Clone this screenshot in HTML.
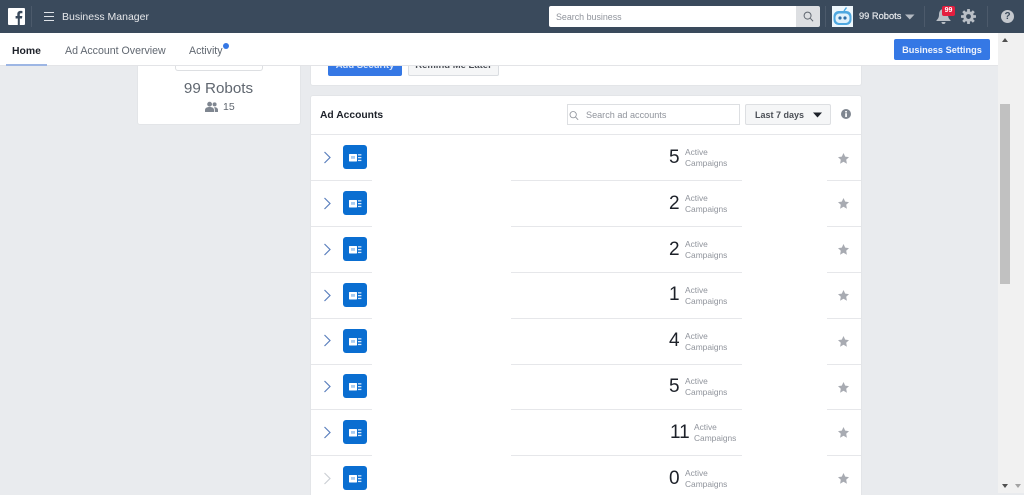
<!DOCTYPE html>
<html><head><meta charset="utf-8"><style>
*{box-sizing:border-box}
html,body{margin:0;padding:0;width:1024px;height:493px;overflow:hidden;background:#e9ebee;font-family:"Liberation Sans",sans-serif;color:#1d2129}
.a{position:absolute}
.t{position:absolute;white-space:nowrap}
.ln{position:absolute;height:1px;background:#e6e7ea}
.cnt{position:absolute;font-size:19px;line-height:22px;color:#1d2129;white-space:nowrap}
.lb{position:absolute;font-size:8.4px;line-height:10.5px;color:#90949c;white-space:nowrap}
.ic{position:absolute;left:343px;width:24px;height:24px;background:#0a6ed1;border-radius:3px}
</style></head><body>

<!-- left card -->
<div class="a" style="left:137px;top:60px;width:164px;height:65px;background:#fff;border:1px solid #e3e5e8;border-top:0;border-radius:0 0 3px 3px"></div>
<div class="a" style="left:175px;top:66px;width:88px;height:5px;background:#fff;border:1px solid #dddfe2;border-top:0;border-radius:0 0 3px 3px"></div>
<div class="t" style="left:137px;top:79px;width:163px;text-align:center;font-size:15.2px;line-height:20px;color:#606770">99 Robots</div>
<svg class="a" style="left:205px;top:101px" width="13" height="12" viewBox="0 0 13 12"><circle cx="4.600" cy="3.200" r="2.400" fill="#7f8690"/><circle cx="9.600" cy="3.400" r="2" fill="#7f8690"/><path d="M0 11V9c0-2 2-3 4.600-3s4.400 1 4.400 3v2z" fill="#7f8690"/><path d="M9.800 11V8.600c0-1-.4-1.800-1-2.300 2.500-.3 4.200.8 4.200 2.500V11z" fill="#7f8690"/></svg>
<div class="t" style="left:223px;top:101px;font-size:10.500px;line-height:13px;color:#606770">15</div>

<!-- security panel -->
<div class="a" style="left:310px;top:60px;width:552px;height:26px;background:#fff;border:1px solid #e3e5e8;border-top:0;border-radius:0 0 3px 3px"></div>
<div class="a" style="left:328px;top:50px;width:74px;height:26px;background:#3578e5;border-radius:2px;overflow:hidden"><div class="t" style="left:0;width:74px;text-align:center;top:10px;font-size:9.500px;line-height:12px;font-weight:bold;color:#dbe7fb">Add Security</div></div>
<div class="a" style="left:408px;top:50px;width:91px;height:26px;background:#f5f6f7;border:1px solid #dadde1;border-radius:2px;overflow:hidden"><div class="t" style="left:0;width:89px;text-align:center;top:9px;font-size:9.500px;line-height:12px;font-weight:bold;color:#4b4f56">Remind Me Later</div></div>

<!-- Ad accounts panel -->
<div class="a" style="left:310px;top:95px;width:552px;height:400px;background:#fff;border:1px solid #e3e5e8;border-bottom:0;border-radius:3px 3px 0 0"></div>
<div class="t" style="left:320px;top:109px;font-size:10.300px;line-height:14px;font-weight:bold;color:#1d2129">Ad Accounts</div>
<div class="a" style="left:567px;top:104px;width:173px;height:21px;background:#fff;border:1px solid #dddfe2"></div>
<svg class="a" style="left:569px;top:110px" width="10" height="11" viewBox="0 0 12 12" fill="none" stroke="#90949c" stroke-width="1"><circle cx="5" cy="5" r="3.800"/><path d="M8 8l3 3.200"/></svg>
<div class="t" style="left:586px;top:109px;font-size:9.100px;line-height:13px;color:#90949c">Search ad accounts</div>
<div class="a" style="left:745px;top:104px;width:86px;height:21px;background:#f5f6f7;border:1px solid #dddfe2;border-radius:2px"></div>
<div class="t" style="left:755px;top:109px;font-size:9px;line-height:13px;font-weight:bold;color:#4b4f56">Last 7 days</div>
<svg class="a" style="left:813px;top:112px" width="10" height="6" viewBox="0 0 10 6"><path d="M0 .5h9L4.500 5.500z" fill="#1d2129"/></svg>
<svg class="a" style="left:841px;top:109px" width="10" height="10" viewBox="0 0 10 10"><circle cx="5" cy="5" r="5" fill="#7f8690"/><rect x="4.200" y="4.200" width="1.700" height="3.800" fill="#fff"/><rect x="4.200" y="2" width="1.700" height="1.500" fill="#fff"/></svg>
<div class="ln" style="left:311px;top:134px;width:550px"></div>

<!-- row separators -->
<div class="ln" style="left:311px;top:180px;width:61px"></div><div class="ln" style="left:511px;top:180px;width:231px"></div><div class="ln" style="left:827px;top:180px;width:34px"></div>
<div class="ln" style="left:311px;top:226px;width:61px"></div><div class="ln" style="left:511px;top:226px;width:231px"></div><div class="ln" style="left:827px;top:226px;width:34px"></div>
<div class="ln" style="left:311px;top:272px;width:61px"></div><div class="ln" style="left:511px;top:272px;width:231px"></div><div class="ln" style="left:827px;top:272px;width:34px"></div>
<div class="ln" style="left:311px;top:318px;width:61px"></div><div class="ln" style="left:511px;top:318px;width:231px"></div><div class="ln" style="left:827px;top:318px;width:34px"></div>
<div class="ln" style="left:311px;top:364px;width:61px"></div><div class="ln" style="left:511px;top:364px;width:231px"></div><div class="ln" style="left:827px;top:364px;width:34px"></div>
<div class="ln" style="left:311px;top:409px;width:61px"></div><div class="ln" style="left:511px;top:409px;width:231px"></div><div class="ln" style="left:827px;top:409px;width:34px"></div>
<div class="ln" style="left:311px;top:455px;width:61px"></div><div class="ln" style="left:511px;top:455px;width:231px"></div><div class="ln" style="left:827px;top:455px;width:34px"></div>

<svg width="0" height="0" style="position:absolute"><defs>
<g id="ai"><rect x="6" y="9" width="8" height="7.500" rx=".6" fill="#fff"/><rect x="8" y="11" width="4" height="2.800" fill="#a9cdf2"/><rect x="15" y="9.200" width="3.400" height="1.300" fill="#d6e6f8"/><rect x="15" y="12" width="3.400" height="1.300" fill="#d6e6f8"/><rect x="15" y="14.800" width="3.400" height="1.300" fill="#d6e6f8"/></g>
<path id="st" d="M5.500 0l1.700 3.600 3.800.5-2.800 2.700.7 3.900-3.400-1.900-3.400 1.900.7-3.900L0 4.100l3.800-.5z" fill="#a8abb2"/>
</defs></svg>

<!-- row 1 -->
<svg class="a" style="left:323px;top:151px" width="9" height="13" viewBox="0 0 9 13"><path d="M1.500 1l5.500 5.500L1.500 12" fill="none" stroke="#5b7fbd" stroke-width="1.200"/></svg>
<svg class="ic" style="top:145px" viewBox="0 0 24 24"><use href="#ai"/></svg>
<div class="cnt" style="left:669px;top:147px">5</div><div class="lb" style="left:685px;top:147px">Active<br>Campaigns</div>
<svg class="a" style="left:838px;top:153px" width="11" height="11"><use href="#st"/></svg>
<!-- row 2 -->
<svg class="a" style="left:323px;top:197px" width="9" height="13" viewBox="0 0 9 13"><path d="M1.500 1l5.500 5.500L1.500 12" fill="none" stroke="#5b7fbd" stroke-width="1.200"/></svg>
<svg class="ic" style="top:191px" viewBox="0 0 24 24"><use href="#ai"/></svg>
<div class="cnt" style="left:669px;top:193px">2</div><div class="lb" style="left:685px;top:193px">Active<br>Campaigns</div>
<svg class="a" style="left:838px;top:198px" width="11" height="11"><use href="#st"/></svg>
<!-- row 3 -->
<svg class="a" style="left:323px;top:243px" width="9" height="13" viewBox="0 0 9 13"><path d="M1.500 1l5.500 5.500L1.500 12" fill="none" stroke="#5b7fbd" stroke-width="1.200"/></svg>
<svg class="ic" style="top:237px" viewBox="0 0 24 24"><use href="#ai"/></svg>
<div class="cnt" style="left:669px;top:239px">2</div><div class="lb" style="left:685px;top:239px">Active<br>Campaigns</div>
<svg class="a" style="left:838px;top:244px" width="11" height="11"><use href="#st"/></svg>
<!-- row 4 -->
<svg class="a" style="left:323px;top:289px" width="9" height="13" viewBox="0 0 9 13"><path d="M1.500 1l5.500 5.500L1.500 12" fill="none" stroke="#5b7fbd" stroke-width="1.200"/></svg>
<svg class="ic" style="top:283px" viewBox="0 0 24 24"><use href="#ai"/></svg>
<div class="cnt" style="left:669px;top:284px">1</div><div class="lb" style="left:685px;top:285px">Active<br>Campaigns</div>
<svg class="a" style="left:838px;top:290px" width="11" height="11"><use href="#st"/></svg>
<!-- row 5 -->
<svg class="a" style="left:323px;top:334px" width="9" height="13" viewBox="0 0 9 13"><path d="M1.500 1l5.500 5.500L1.500 12" fill="none" stroke="#5b7fbd" stroke-width="1.200"/></svg>
<svg class="ic" style="top:329px" viewBox="0 0 24 24"><use href="#ai"/></svg>
<div class="cnt" style="left:669px;top:330px">4</div><div class="lb" style="left:685px;top:331px">Active<br>Campaigns</div>
<svg class="a" style="left:838px;top:336px" width="11" height="11"><use href="#st"/></svg>
<!-- row 6 -->
<svg class="a" style="left:323px;top:380px" width="9" height="13" viewBox="0 0 9 13"><path d="M1.500 1l5.500 5.500L1.500 12" fill="none" stroke="#5b7fbd" stroke-width="1.200"/></svg>
<svg class="ic" style="top:374px" viewBox="0 0 24 24"><use href="#ai"/></svg>
<div class="cnt" style="left:669px;top:376px">5</div><div class="lb" style="left:685px;top:376px">Active<br>Campaigns</div>
<svg class="a" style="left:838px;top:382px" width="11" height="11"><use href="#st"/></svg>
<!-- row 7 -->
<svg class="a" style="left:323px;top:426px" width="9" height="13" viewBox="0 0 9 13"><path d="M1.500 1l5.500 5.500L1.500 12" fill="none" stroke="#5b7fbd" stroke-width="1.200"/></svg>
<svg class="ic" style="top:420px" viewBox="0 0 24 24"><use href="#ai"/></svg>
<div class="cnt" style="left:670px;top:422px">11</div><div class="lb" style="left:694px;top:422px">Active<br>Campaigns</div>
<svg class="a" style="left:838px;top:427px" width="11" height="11"><use href="#st"/></svg>
<!-- row 8 -->
<svg class="a" style="left:323px;top:472px" width="9" height="13" viewBox="0 0 9 13"><path d="M1.500 1l5.500 5.500L1.500 12" fill="none" stroke="#ccd0d5" stroke-width="1.200"/></svg>
<svg class="ic" style="top:466px" viewBox="0 0 24 24"><use href="#ai"/></svg>
<div class="cnt" style="left:669px;top:468px">0</div><div class="lb" style="left:685px;top:468px">Active<br>Campaigns</div>
<svg class="a" style="left:838px;top:473px" width="11" height="11"><use href="#st"/></svg>

<!-- sub nav -->
<div class="a" style="left:0;top:33px;width:998px;height:33px;background:#fff;border-bottom:1px solid #e3e4e7"></div>
<div class="t" style="left:12px;top:45px;font-size:10.400px;line-height:14px;font-weight:bold;color:#1d2129">Home</div>
<div class="a" style="left:6px;top:64px;width:41px;height:2px;background:#9db6e4"></div>
<div class="t" style="left:65px;top:44px;font-size:10.600px;line-height:14px;color:#606770">Ad Account Overview</div>
<div class="t" style="left:189px;top:44px;font-size:10.600px;line-height:14px;color:#606770">Activity</div>
<div class="a" style="left:223px;top:43px;width:6px;height:6px;border-radius:50%;background:#3578e5"></div>
<div class="a" style="left:894px;top:39px;width:96px;height:21px;background:#3578e5;border-radius:2px"></div>
<div class="t" style="left:894px;top:44px;width:96px;text-align:center;font-size:9.200px;line-height:12px;font-weight:bold;color:#f0f4fc">Business Settings</div>

<!-- top bar -->
<div class="a" style="left:0;top:0;width:1024px;height:33px;background:#3a4a5c"></div>
<svg class="a" style="left:8px;top:8px" width="17" height="17" viewBox="0 0 17 17"><rect width="17" height="17" rx="1" fill="#fff"/><path d="M11.800 17v-6.500h2.200l.3-2.500h-2.500V6.400c0-.8.200-1.200 1.200-1.200h1.400V3c-.3 0-1-.1-1.900-.1-1.900 0-3.200 1.100-3.200 3.300V8H7.600v2.500h2.200V17z" fill="#3a4a5c"/></svg>
<div class="a" style="left:31px;top:6px;width:1px;height:21px;background:#4c5a6b"></div>
<div class="a" style="left:44px;top:12px;width:10px;height:1.300px;background:#dfe3e8"></div>
<div class="a" style="left:44px;top:16px;width:10px;height:1.300px;background:#dfe3e8"></div>
<div class="a" style="left:44px;top:20px;width:10px;height:1.300px;background:#dfe3e8"></div>
<div class="t" style="left:62px;top:10px;font-size:10.500px;line-height:14px;color:#e6e8eb">Business Manager</div>

<div class="a" style="left:549px;top:6px;width:247px;height:21px;background:#fff;border-radius:2px 0 0 2px"></div>
<div class="a" style="left:796px;top:6px;width:24px;height:21px;background:#dddfe2;border-radius:0 2px 2px 0"></div>
<div class="t" style="left:556px;top:11px;font-size:8.900px;line-height:13px;color:#90949c">Search business</div>
<svg class="a" style="left:803px;top:11px" width="11" height="11" viewBox="0 0 12 12" fill="none" stroke="#606770" stroke-width="1.100"><circle cx="5" cy="5" r="3.800"/><path d="M8 8l3 3.200"/></svg>
<div class="a" style="left:825px;top:6px;width:1px;height:21px;background:#4c5a6b"></div>
<svg class="a" style="left:832px;top:6px" width="21" height="21" viewBox="0 0 21 21"><rect width="21" height="21" fill="#eef7fc"/><path d="M12 5l2.500-3.500" stroke="#4fa8e0" stroke-width="1.500"/><rect x="1.500" y="5" width="18" height="14" rx="5" fill="#4fa8e0"/><rect x="3.500" y="7.500" width="14" height="9.500" rx="4" fill="#e2f2fb"/><circle cx="8" cy="12" r="1.600" fill="#2f6fa8"/><circle cx="13" cy="12" r="1.600" fill="#2f6fa8"/></svg>
<div class="t" style="left:859px;top:10px;font-size:9.300px;line-height:12px;font-weight:normal;color:#e6e8eb;-webkit-text-stroke:.2px #e6e8eb">99 Robots</div>
<svg class="a" style="left:905px;top:14px" width="10" height="6" viewBox="0 0 10 6"><path d="M0 .5h9.500L4.800 5.500z" fill="#b4bac2"/></svg>
<div class="a" style="left:924px;top:6px;width:1px;height:21px;background:#4c5a6b"></div>
<svg class="a" style="left:936px;top:8px" width="15" height="16" viewBox="0 0 15 16"><path d="M7.500 1C4.500 1 3 3.500 3 6.500c0 3-1 4.500-2.500 5.800v.7h14v-.7C13 11 12 9.500 12 6.500 12 3.500 10.500 1 7.500 1z" fill="#b9bfc6"/><path d="M5.500 14a2 2 0 004 0z" fill="#b9bfc6"/></svg>
<div class="a" style="left:942px;top:6px;width:13px;height:10px;background:#e41e3f;border-radius:2px;color:#fff;font-size:7px;line-height:10px;text-align:center;font-weight:bold">99</div>
<svg class="a" style="left:961px;top:9px" width="15" height="15" viewBox="0 0 16 16"><g fill="#b9bfc6"><circle cx="8" cy="8" r="5.600"/><rect x="6.500" y="0" width="3" height="16" rx=".6"/><rect x="0" y="6.500" width="16" height="3" rx=".6"/><rect x="6.500" y="0" width="3" height="16" rx=".6" transform="rotate(45 8 8)"/><rect x="6.500" y="0" width="3" height="16" rx=".6" transform="rotate(-45 8 8)"/></g><circle cx="8" cy="8" r="2.600" fill="#3a4a5c"/></svg>
<div class="a" style="left:987px;top:6px;width:1px;height:21px;background:#4c5a6b"></div>
<div class="a" style="left:1001px;top:10px;width:13px;height:13px;border-radius:50%;background:#c4c8ce;color:#3a4a5c;font-size:10px;line-height:13px;text-align:center;font-weight:bold">?</div>

<!-- scrollbars -->
<div class="a" style="left:998px;top:33px;width:26px;height:460px;background:#f1f1f1"></div>
<div class="a" style="left:1000px;top:104px;width:10px;height:180px;background:#c1c1c1"></div>
<svg class="a" style="left:1002px;top:38px" width="6" height="4"><path d="M0 4h6L3 0z" fill="#505050"/></svg>
<svg class="a" style="left:1002px;top:484px" width="6" height="4"><path d="M0 0h6L3 4z" fill="#505050"/></svg>
<svg class="a" style="left:1015px;top:484px" width="6" height="4"><path d="M0 0h6L3 4z" fill="#a3a3a3"/></svg>
</body></html>
